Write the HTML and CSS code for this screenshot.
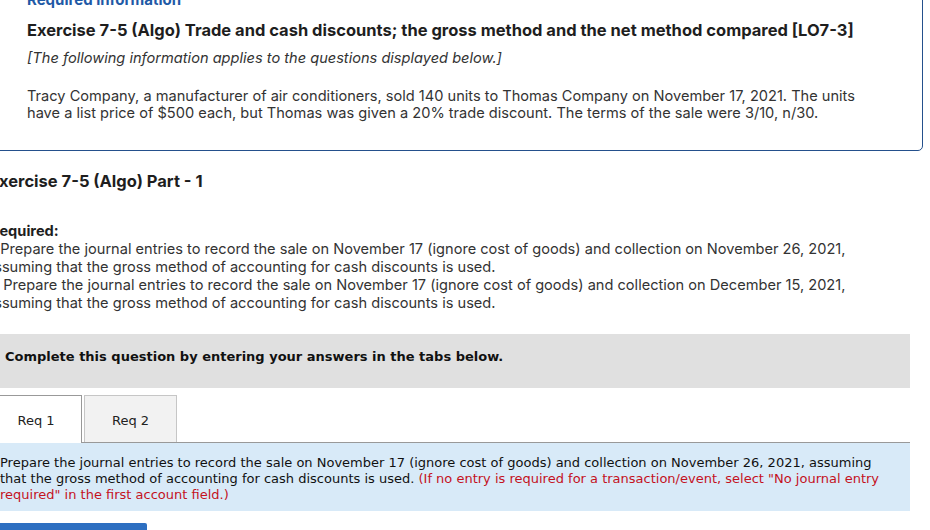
FILE: index.html
```html
<!DOCTYPE html>
<html>
<head>
<meta charset="utf-8">
<link rel="stylesheet" href="styles.css">
</head>
<body>
<div class="page">
  <section class="info-card">
    <h3 class="info-label">Required information</h3>
    <h2 class="info-title">Exercise 7-5 (Algo) Trade and cash discounts; the gross method and the net method compared [LO7-3]</h2>
    <p class="info-note">[The following information applies to the questions displayed below.]</p>
    <p class="info-text">Tracy Company, a manufacturer of air conditioners, sold 140 units to Thomas Company on November 17, 2021. The units<br>have a list price of $500 each, but Thomas was given a 20% trade discount. The terms of the sale were 3/10, n/30.</p>
  </section>

  <h2 class="part-title">Exercise 7-5 (Algo) Part - 1</h2>

  <div class="required">
    <h4 class="req-head">Required:</h4>
    <p class="req-item">1. Prepare the journal entries to record the sale on November 17 (ignore cost of goods) and collection on November 26, 2021,<br>assuming that the gross method of accounting for cash discounts is used.</p>
    <p class="req-item">2. Prepare the journal entries to record the sale on November 17 (ignore cost of goods) and collection on December 15, 2021,<br>assuming that the gross method of accounting for cash discounts is used.</p>
  </div>

  <div class="instruct">Complete this question by entering your answers in the tabs below.</div>

  <div class="tabs">
    <div class="tab active">Req 1</div>
    <div class="tab">Req 2</div>
  </div>

  <div class="tab-panel">
    Prepare the journal entries to record the sale on November 17 (ignore cost of goods) and collection on November 26, 2021, assuming<br>that the gross method of accounting for cash discounts is used. <span class="warn">(If no entry is required for a transaction/event, select "No journal entry<br>required" in the first account field.)</span>
  </div>

  <div class="btn-row"><div class="btn"></div></div>
</div>
</body>
</html>
```

FILE: styles.css
```css
html, body {
  margin: 0;
  padding: 0;
  background: #fff;
  overflow: hidden;
}
body {
  width: 930px;
  height: 530px;
}
.page {
  width: 920px;
  margin-left: -10px;
  margin-top: -10px;
  font-family: "Inter", "Lato", sans-serif;
  color: #222;
}
.info-card {
  margin-left: -10px;
  margin-right: -13px;
  border: 1px solid #24508c;
  border-radius: 5px;
  padding: 0 40px 28px 46px;
}
.info-label {
  margin: 0;
  font-size: 15px;
  line-height: 18px;
  font-weight: 700;
  color: #1f5aa6;
}
.info-title {
  margin: 10px 0 0;
  font-size: 16.5px;
  line-height: 22px;
  font-weight: 700;
  color: #1e1e1e;
}
.info-note {
  margin: 7px 0 0;
  font-size: 14.6px;
  line-height: 20px;
  font-style: italic;
  color: #333;
}
.info-text {
  margin: 20px 0 0;
  font-size: 14.6px;
  line-height: 17px;
  color: #333;
}
.part-title {
  margin: 19px 0 0 -1px;
  font-size: 16.5px;
  line-height: 22px;
  font-weight: 700;
  color: #1e1e1e;
}
.required {
  margin-top: 30px;
  font-size: 14.6px;
  line-height: 18px;
  color: #333;
}
.req-head {
  margin: 0;
  font-size: 14.6px;
  line-height: 18px;
  font-weight: 700;
  color: #1e1e1e;
}
.req-item {
  margin: 0 0 0 -4px;
}
.instruct {
  margin-top: 22px;
  background: #e0e0e0;
  height: 54px;
  box-sizing: border-box;
  padding: 14px 15px 0;
  font-family: "DejaVu Sans", Verdana, sans-serif;
  font-size: 13px;
  line-height: 18px;
  font-weight: 700;
  color: #111;
}
.tabs {
  display: flex;
  gap: 2px;
  margin-top: 7px;
  border-bottom: 1px solid #999;
  font-family: "DejaVu Sans", Verdana, sans-serif;
  font-size: 13px;
  color: #222;
}
.tab {
  width: 93px;
  height: 47px;
  box-sizing: border-box;
  border: 1px solid #c6c6c6;
  border-bottom: none;
  background: #f2f2f2;
  display: flex;
  align-items: center;
  justify-content: center;
  padding-top: 2px;
}
.tab.active {
  width: 92px;
  background: #fff;
  border-color: #999;
  height: 48px;
  margin-bottom: -1px;
}
.tab-panel {
  background: #d8eaf8;
  height: 68px;
  box-sizing: border-box;
  padding: 12px 10px 0 10px;
  font-family: "DejaVu Sans", Verdana, sans-serif;
  font-size: 13px;
  line-height: 16px;
  color: #111;
}
.warn {
  color: #c4121e;
}
.btn-row {
  margin-top: 12px;
}
.btn {
  width: 157px;
  height: 20px;
  background: #2d6fc1;
  border-radius: 2px;
}
```
